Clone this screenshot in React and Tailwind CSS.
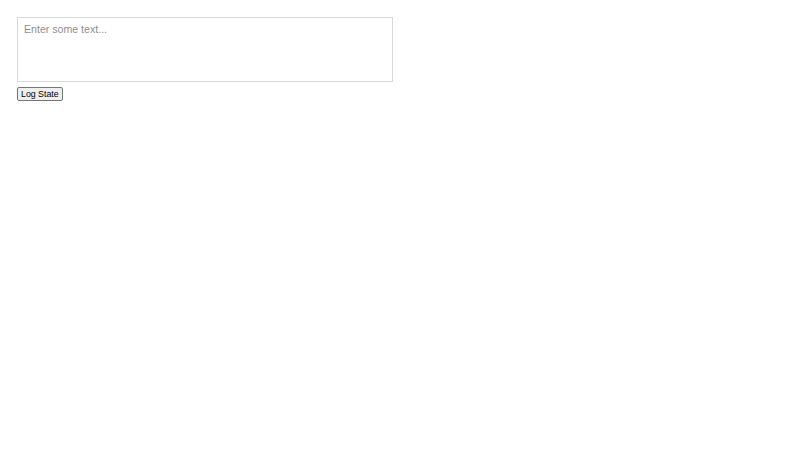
export default function App() {
  return (
    <div className="min-h-[450px] bg-white p-[17px] font-['Liberation_Sans',Arial,sans-serif]">
      <textarea
        placeholder="Enter some text..."
        className="block h-[65px] w-[376px] resize-none border border-[#d9d9d9] px-[6px] py-[5px] font-['Liberation_Sans',Arial,sans-serif] text-[10.6px] leading-[1.2] text-[#333] outline-none placeholder:text-[#8f8f8f]"
      />
      <button className="mt-[5px] block rounded-[2px] border border-[#767676] bg-[#efefef] px-[3px] py-0 font-['Liberation_Sans',Arial,sans-serif] text-[8.8px] leading-[12px] text-black">
        Log State
      </button>
    </div>
  );
}
